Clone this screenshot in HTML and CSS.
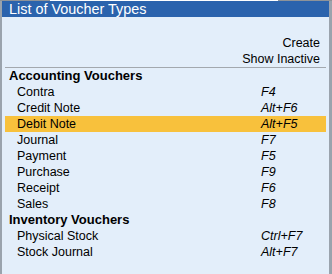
FILE: index.html
```html
<!DOCTYPE html>
<html>
<head>
<meta charset="utf-8">
<link rel="stylesheet" href="styles.css">
</head>
<body>
<div class="topstrip"><span class="ts-gray ts-left"></span><span class="ts-white"></span><span class="ts-gray ts-right"></span></div>
<div class="window">
  <div class="titlebar">List of Voucher Types</div>
  <div class="content">
    <div class="actions">
      <div class="action">Create</div>
      <div class="action">Show Inactive</div>
    </div>
    <div class="sep"></div>
    <div class="group">Accounting Vouchers</div>
    <div class="row"><span class="name">Contra</span><span class="key">F4</span></div>
    <div class="row"><span class="name">Credit Note</span><span class="key">Alt+F6</span></div>
    <div class="row selected"><span class="name">Debit Note</span><span class="key">Alt+F5</span></div>
    <div class="row"><span class="name">Journal</span><span class="key">F7</span></div>
    <div class="row"><span class="name">Payment</span><span class="key">F5</span></div>
    <div class="row"><span class="name">Purchase</span><span class="key">F9</span></div>
    <div class="row"><span class="name">Receipt</span><span class="key">F6</span></div>
    <div class="row"><span class="name">Sales</span><span class="key">F8</span></div>
    <div class="group">Inventory Vouchers</div>
    <div class="row"><span class="name">Physical Stock</span><span class="key">Ctrl+F7</span></div>
    <div class="row"><span class="name">Stock Journal</span><span class="key">Alt+F7</span></div>
  </div>
</div>
</body>
</html>
```
FILE: styles.css
```css
html, body {
  margin: 0;
  padding: 0;
  width: 332px;
  height: 274px;
  overflow: hidden;
  background: #e3eefa;
  font-family: "Liberation Sans", Arial, sans-serif;
  font-size: 12.5px;
  color: #000;
}
.topstrip {
  display: flex;
  height: 1px;
}
.ts-gray { background: #8e9399; }
.ts-left { width: 50px; }
.ts-white { width: 228px; background: #ffffff; }
.ts-right { flex: 1; }
.window {
  height: 273px;
  border-left: 2px solid #9aa3ad;
  border-right: 3px solid #9aa3ad;
  background: #e3eefa;
  box-sizing: border-box;
}
.titlebar {
  height: 16px;
  line-height: 16px;
  background: #2b63ad;
  color: #fff;
  font-size: 14.4px;
  padding-left: 7px;
}
.content {
  padding-top: 18px;
}
.actions {
  padding-right: 9px;
  text-align: right;
}
.action {
  height: 16px;
  line-height: 16px;
}
.sep {
  height: 1px;
  background: #a3a8ae;
  margin: 0 3px;
}
.group {
  height: 16px;
  line-height: 16px;
  font-size: 13px;
  font-weight: bold;
  padding-left: 7px;
}
.row {
  display: flex;
  height: 16px;
  line-height: 16px;
  padding-left: 12px;
  margin: 0 3px;
}
.row .name { width: 244px; }
.row .key { font-style: italic; }
.row.selected { background: #f8c13c; }
```
